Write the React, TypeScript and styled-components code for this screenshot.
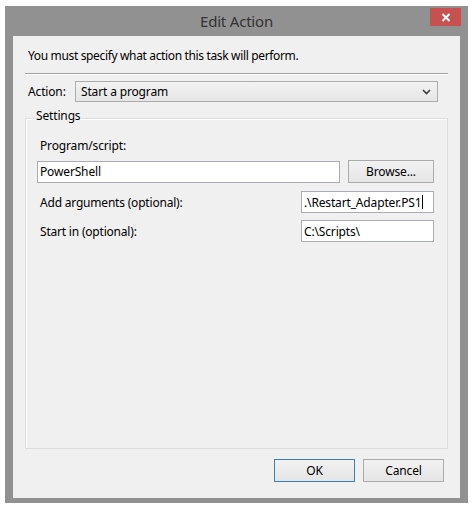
import styled, { createGlobalStyle } from 'styled-components';

const GlobalStyle = createGlobalStyle`
	html, body {
		margin: 0;
		padding: 0;
		background: #ffffff;
	}
	body {
		font-family: 'Noto Sans', 'Open Sans', sans-serif;
		font-size: 12px;
		color: #000;
	}
	* {
		box-sizing: border-box;
	}
`;

const Page = styled.div`
	width: 474px;
	height: 513px;
	padding: 6px 0 0 5px;
`;

const Window = styled.div`
	width: 463px;
	height: 497px;
	background: #919191;
	padding: 0 8px 5px 8px;
	display: flex;
	flex-direction: column;
`;

const TitleBar = styled.div`
	height: 30px;
	display: grid;
	grid-template-columns: 1fr auto 1fr;
	align-items: start;
`;

const Title = styled.div`
	grid-column: 2;
	font-family: 'Noto Sans', sans-serif;
	font-size: 15px;
	line-height: 30px;
	color: #333333;
	letter-spacing: -0.2px;
`;

const CloseButton = styled.div`
	grid-column: 3;
	justify-self: end;
	margin-top: 2px;
	margin-right: -1px;
	width: 31px;
	height: 18px;
	background: #c75050;
	display: flex;
	align-items: center;
	justify-content: center;
`;

const Client = styled.div`
	flex: 1;
	background: #f0f0f0;
	padding: 12px 12px 16px 12px;
	display: flex;
	flex-direction: column;
`;

const Instruction = styled.div`
	line-height: 16px;
	margin-left: 3px;
	letter-spacing: -0.35px;
`;

const Separator = styled.div`
	margin-top: 9px;
	height: 2px;
	border-top: 1px solid #a0a0a0;
	border-bottom: 1px solid #ffffff;
`;

const ActionRow = styled.div`
	margin-top: 6px;
	padding: 0 10px 0 3px;
	display: flex;
	align-items: center;
`;

const ActionLabel = styled.div`
	width: 47px;
	letter-spacing: -0.15px;
`;

const Select = styled.div`
	flex: 1;
	height: 21px;
	border: 1px solid #acacac;
	background: linear-gradient(#f2f2f2, #e6e6e6);
	display: flex;
	align-items: center;
	justify-content: space-between;
	padding: 0 6px 0 5px;
	letter-spacing: -0.15px;
`;

const Group = styled.fieldset`
	flex: 1;
	margin: 6px 0 0 0;
	padding: 0 13px 0 11px;
	border: 1px solid #dcdcdc;
	box-shadow: inset 1px 1px 0 #ffffff;
	min-width: 0;
`;

const Legend = styled.legend`
	margin-left: -3px;
	padding: 0 2px 4px 2px;
	line-height: 16px;
	letter-spacing: -0.15px;
`;

const FieldLabel = styled.div`
	margin-top: 10px;
	padding-left: 3px;
	line-height: 16px;
	letter-spacing: -0.15px;
`;

const Row = styled.div<{ $top: number }>`
	margin-top: ${(p) => p.$top}px;
	display: flex;
	align-items: center;
	gap: 8px;
`;

const RowLabel = styled.div`
	flex: 1;
	padding-left: 3px;
	letter-spacing: -0.2px;
`;

const TextBox = styled.div<{ $width?: number }>`
	${(p) => (p.$width ? `width: ${p.$width}px;` : 'flex: 1;')}
	height: 22px;
	background: #ffffff;
	border: 1px solid #abadb3;
	padding: 0 2px;
	display: flex;
	align-items: center;
	white-space: nowrap;
	overflow: hidden;
	letter-spacing: -0.15px;
`;

const Caret = styled.span`
	display: inline-block;
	width: 1px;
	height: 14px;
	margin-left: 1px;
	background: #000;
`;

const Button = styled.div<{ $default?: boolean }>`
	width: 81px;
	height: 23px;
	border: 1px solid ${(p) => (p.$default ? '#3c7fb1' : '#acacac')};
	background: linear-gradient(#f2f2f2, #e5e5e5);
	display: flex;
	align-items: center;
	justify-content: center;
	letter-spacing: -0.15px;
`;

const BrowseButton = styled(Button)`
	width: 86px;
`;

const Footer = styled.div`
	margin-top: 10px;
	margin-right: 4px;
	display: flex;
	justify-content: flex-end;
	gap: 8px;
`;

const App = () => {
	return (
		<Page>
			<GlobalStyle />
			<Window>
				<TitleBar>
					<Title>Edit Action</Title>
					<CloseButton>
						<svg width="10" height="9" viewBox="0 0 10 9">
							<path d="M1.5 1 L8.5 8 M8.5 1 L1.5 8" stroke="#ffffff" strokeWidth="2" />
						</svg>
					</CloseButton>
				</TitleBar>
				<Client>
					<Instruction>You must specify what action this task will perform.</Instruction>
					<Separator />
					<ActionRow>
						<ActionLabel>Action:</ActionLabel>
						<Select>
							<span>Start a program</span>
							<svg width="9" height="6" viewBox="0 0 9 6">
								<path d="M1 1 L4.5 4.5 L8 1" stroke="#3c3c3c" strokeWidth="1.6" fill="none" />
							</svg>
						</Select>
					</ActionRow>
					<Group>
						<Legend>Settings</Legend>
						<FieldLabel>Program/script:</FieldLabel>
						<Row $top={6}>
							<TextBox>PowerShell</TextBox>
							<BrowseButton>Browse...</BrowseButton>
						</Row>
						<Row $top={8}>
							<RowLabel>Add arguments (optional):</RowLabel>
							<TextBox $width={133}>
								.\Restart_Adapter.PS1
								<Caret />
							</TextBox>
						</Row>
						<Row $top={7}>
							<RowLabel>Start in (optional):</RowLabel>
							<TextBox $width={133}>C:\Scripts\</TextBox>
						</Row>
					</Group>
					<Footer>
						<Button $default>OK</Button>
						<Button>Cancel</Button>
					</Footer>
				</Client>
			</Window>
		</Page>
	);
};

export default App;
